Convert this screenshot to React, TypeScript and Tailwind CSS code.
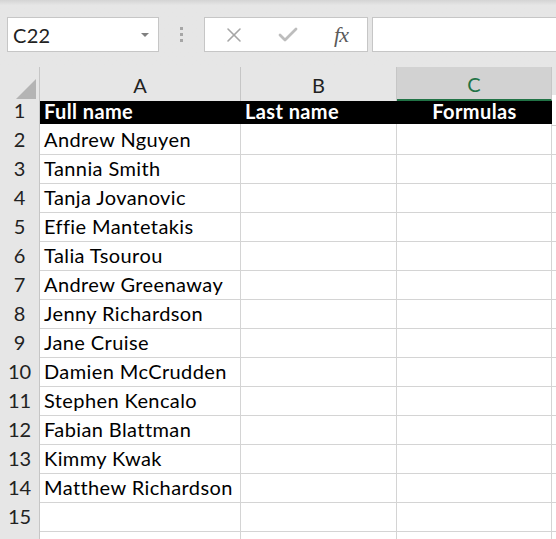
import { Check, X } from 'lucide-react'

const names = [
  'Andrew Nguyen',
  'Tannia Smith',
  'Tanja Jovanovic',
  'Effie Mantetakis',
  'Talia Tsourou',
  'Andrew Greenaway',
  'Jenny Richardson',
  'Jane Cruise',
  'Damien McCrudden',
  'Stephen Kencalo',
  'Fabian Blattman',
  'Kimmy Kwak',
  'Matthew Richardson',
  '',
  '',
]

const cols = 'grid grid-cols-[40px_201px_156px_155px_1fr]'

const FormulaBar = () => {
  return (
    <div className="h-[67px] bg-gradient-to-b from-[#d4d4d4] via-[#e6e6e6] via-[8%] to-[#e6e6e6] flex items-start pt-[17px]">
      <div className="ml-[7px] w-[152px] h-[35px] bg-white border border-[#c6c6c6] flex items-center justify-between pl-[5px] pr-[9px]">
        <span className="text-[20px] tracking-[0.3px] text-[#222]">C22</span>
        <span className="w-0 h-0 border-l-[4px] border-r-[4px] border-t-[4px] border-l-transparent border-r-transparent border-t-[#808080]" />
      </div>
      <div className="ml-[20px] w-[4px] h-[35px] flex flex-col items-center justify-center gap-[3px]">
        <span className="w-[3px] h-[3px] bg-[#a6a6a6]" />
        <span className="w-[3px] h-[3px] bg-[#a6a6a6]" />
        <span className="w-[3px] h-[3px] bg-[#a6a6a6]" />
      </div>
      <div className="ml-[21px] w-[164px] h-[35px] bg-white border border-[#c6c6c6] flex items-center">
        <div className="w-[55px] flex justify-center pl-[2px]">
          <X size={24} strokeWidth={1.6} className="text-[#a6a6a6]" />
        </div>
        <div className="w-[55px] flex justify-center">
          <Check size={24} strokeWidth={2.8} className="text-[#bdbdbd]" />
        </div>
        <div className="w-[52px] flex justify-center">
          <span className="font-['Liberation_Serif'] italic text-[22px] text-[#5a5a5a] tracking-[-1px]">fx</span>
        </div>
      </div>
      <div className="ml-[4px] flex-1 h-[35px] bg-white border border-[#c6c6c6] border-r-0" />
    </div>
  )
}

const Header = () => {
  return (
    <div className={`${cols} h-[28px] text-[20px]`}>
      <div className="bg-[#e6e6e6] border-r border-[#c6c6c6] flex items-end justify-end pr-[3px] pb-[2px]">
        <div className="w-0 h-0 relative">
          <span className="absolute right-0 bottom-0 w-0 h-0 border-l-[20px] border-b-[20px] border-l-transparent border-b-[#b4b4b4]" />
        </div>
      </div>
      <div className="bg-[#e6e6e6] border-r border-[#c6c6c6] flex items-center justify-center pt-[2px] text-[#222]">A</div>
      <div className="bg-[#e6e6e6] border-r border-[#c6c6c6] flex items-center justify-center pt-[2px] text-[#222]">B</div>
      <div className="bg-[#d2d2d2] border-r border-[#c6c6c6] border-b-2 border-b-[#217346] flex items-center justify-center text-[#217346] pt-[2px]">C</div>
      <div className="bg-[#e6e6e6]" />
    </div>
  )
}

const App = () => {
  return (
    <div className="w-[556px] h-[539px] overflow-hidden bg-white font-['Lato','Liberation_Sans',sans-serif]">
      <FormulaBar />
      <Header />
      <div className={`${cols} h-[29px] bg-black text-white font-bold text-[20px] tracking-[0.4px]`}>
        <div className="bg-[#e6e6e6] border-r border-b border-[#c6c6c6] flex items-center justify-center font-normal text-[#222] tracking-normal">1</div>
        <div className="flex items-center pl-[4px]">Full name</div>
        <div className="flex items-center pl-[4px]">Last name</div>
        <div className="flex items-center justify-center">Formulas</div>
        <div className="bg-white border-b border-[#d4d4d4]" />
      </div>
      {names.map((name, i) => (
        <div key={i} className={`${cols} h-[29px] text-[20px] text-black`}>
          <div className="bg-[#e6e6e6] border-r border-b border-[#c6c6c6] flex items-center justify-center text-[#222]">
            {i < 14 ? i + 2 : ''}
          </div>
          <div className="border-r border-b border-[#d4d4d4] flex items-center pl-[4px] whitespace-nowrap tracking-[0.4px]">
            {name}
          </div>
          <div className="border-r border-b border-[#d4d4d4]" />
          <div className="border-r border-b border-[#d4d4d4]" />
          <div className="border-b border-[#d4d4d4]" />
        </div>
      ))}
    </div>
  )
}

export default App
